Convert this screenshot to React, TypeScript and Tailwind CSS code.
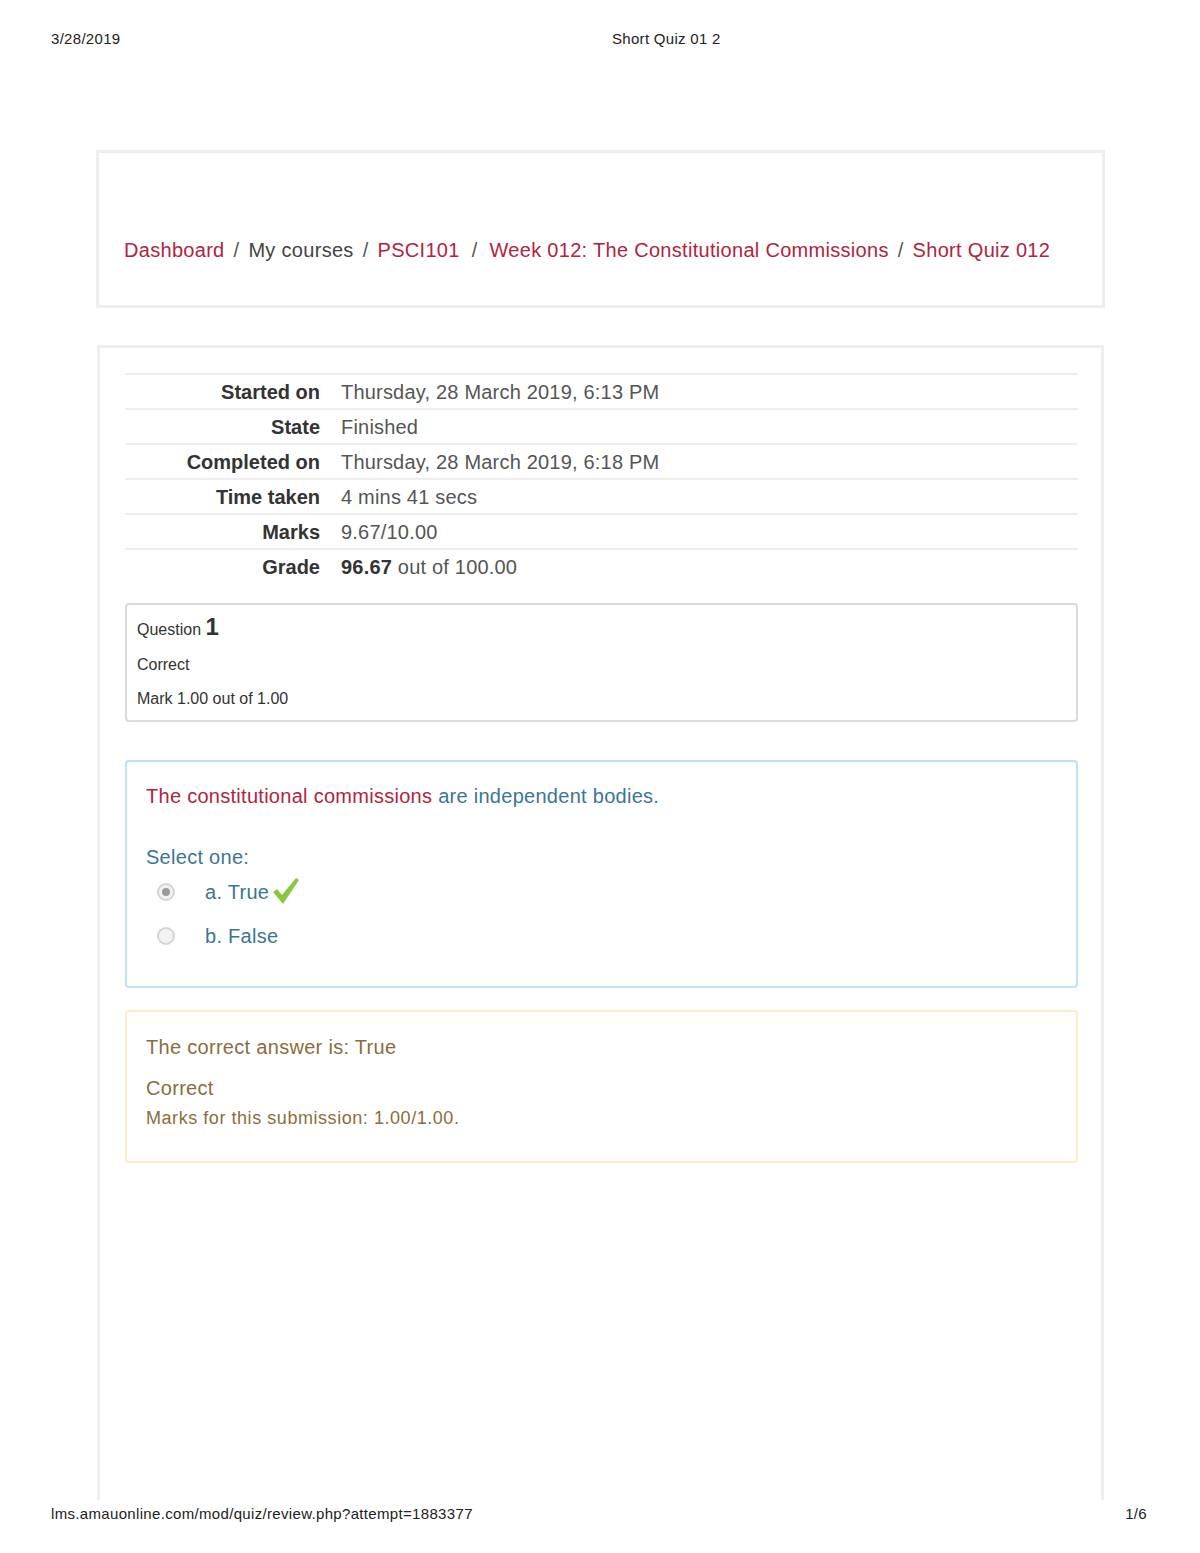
import React from 'react';

// Summary rows of the attempt
const summary: { label: string; value: React.ReactNode }[] = [
  { label: 'Started on', value: 'Thursday, 28 March 2019, 6:13 PM' },
  { label: 'State', value: 'Finished' },
  { label: 'Completed on', value: 'Thursday, 28 March 2019, 6:18 PM' },
  { label: 'Time taken', value: '4 mins 41 secs' },
  { label: 'Marks', value: '9.67/10.00' },
  {
    label: 'Grade',
    value: (
      <>
        <b className="font-bold text-[#333]">96.67</b> out of 100.00
      </>
    ),
  },
];

const Sep: React.FC = () => <span className="mx-[9px] text-[#555]">/</span>;

const Radio: React.FC<{ checked?: boolean }> = ({ checked }) => (
  <span className="flex h-[18px] w-[18px] items-center justify-center rounded-full border-2 border-[#d4d4d4] bg-[#f2f2f2]">
    {checked && <span className="h-[8px] w-[8px] rounded-full bg-[#9a9a9a]" />}
  </span>
);

const Check: React.FC = () => (
  <svg width="28" height="28" viewBox="0 0 28 28" className="ml-[3px] -mt-[2px]">
    <path d="M1 15 L5 12 L10 18 L24 1 L27 3 L11 27 Z" fill="#8cc63e" />
  </svg>
);

export default function App() {
  return (
    <div className="relative h-[1553px] w-[1200px] bg-white font-['Liberation_Sans',Arial,sans-serif] text-[#333]">
      {/* print header */}
      <div className="flex px-[51px] pt-[29px] text-[15px] leading-[20px] tracking-[0.3px] text-[#222]">
        <span className="w-[561px]">3/28/2019</span>
        <span>Short Quiz 01 2</span>
      </div>

      {/* breadcrumb */}
      <div className="ml-[96px] mt-[101px] h-[158px] w-[1009px] border-[3px] border-[#eeeeee] pl-[25px] pt-[83px] text-[20px] leading-[28px] tracking-[0.3px]">
        <span className="text-[#b1243d]">Dashboard</span>
        <Sep />
        <span className="text-[#444]">My courses</span>
        <Sep />
        <span className="text-[#b1243d]">PSCI101</span>
        <span className="mx-[12px] text-[#555]">/</span>
        <span className="text-[#b1243d]">Week 012: The Constitutional Commissions</span>
        <Sep />
        <span className="text-[#b1243d]">Short Quiz 012</span>
      </div>

      {/* main region */}
      <div className="ml-[97px] mt-[37px] h-[1155px] w-[1007px] border-x-[3px] border-t-[3px] border-[#eeeeee] px-[25px] pt-[25px]">
        <div className="w-[953px]">
          {summary.map((row) => (
            <div key={row.label} className="flex h-[35px] items-center border-t-2 border-[#eeeeee] text-[20px]">
              <span className="w-[195px] text-right font-bold text-[#333]">{row.label}</span>
              <span className="pl-[21px] tracking-[0.2px] text-[#555]">{row.value}</span>
            </div>
          ))}
        </div>

        {/* question info */}
        <div className="mt-[20px] w-[953px] rounded-[4px] border-2 border-[#d9dcdc] pb-[3px] pl-[10px] pt-[5px] text-[16px] leading-[34.5px] text-[#333]">
          <div>
            Question <span className="text-[24px] font-bold">1</span>
          </div>
          <div>Correct</div>
          <div>Mark 1.00 out of 1.00</div>
        </div>

        {/* question content */}
        <div className="mt-[38px] h-[228px] w-[953px] rounded-[4px] border-2 border-[#bee3f2] pl-[19px] pt-[20px] text-[20px] leading-[28px] tracking-[0.28px] text-[#3b7694]">
          <p>
            <span className="text-[#b1243d]">The constitutional commissions</span> are independent bodies.
          </p>
          <p className="mt-[34px] h-[26px] leading-[26px]">Select one:</p>
          <div className="flex h-[45px] items-center">
            <span className="ml-[11px]">
              <Radio checked />
            </span>
            <span className="ml-[30px]">a. True</span>
            <Check />
          </div>
          <div className="-mt-[1px] flex h-[45px] items-center">
            <span className="ml-[11px]">
              <Radio />
            </span>
            <span className="ml-[30px]">b. False</span>
          </div>
        </div>

        {/* feedback */}
        <div className="mt-[22px] h-[153px] w-[953px] rounded-[4px] border-2 border-[#fbefc8] pl-[19px] pt-[21px] text-[20px] leading-[28px] tracking-[0.3px] text-[#8a6d3b]">
          <p>The correct answer is: True</p>
          <p className="mt-[13px]">Correct</p>
          <p className="mt-[3px] text-[18px] leading-[26px] tracking-[0.55px]">Marks for this submission: 1.00/1.00.</p>
        </div>
      </div>

      {/* print footer */}
      <div className="flex justify-between px-[51px] pt-[4px] text-[15px] leading-[20px] tracking-[0.33px] text-[#222]">
        <span>lms.amauonline.com/mod/quiz/review.php?attempt=1883377</span>
        <span className="pr-[2px]">1/6</span>
      </div>
    </div>
  );
}
